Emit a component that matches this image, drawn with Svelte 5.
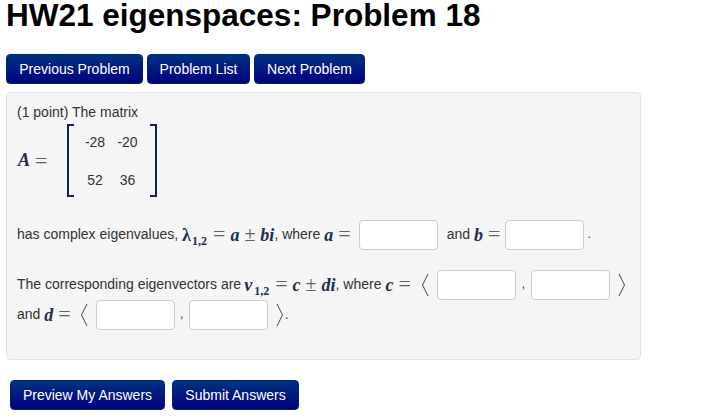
<script>
  const matrix = ['-28', '-20', '52', '36'];
</script>

{#snippet open()}
  <svg class="ang" width="8" height="24" viewBox="0 0 8 24" aria-hidden="true"><path d="M7 1 L1.5 12 L7 23" /></svg>
{/snippet}
{#snippet close()}
  <svg class="ang" width="8" height="24" viewBox="0 0 8 24" aria-hidden="true"><path d="M1 1 L6.5 12 L1 23" /></svg>
{/snippet}

<div class="page">
  <h1>HW21 eigenspaces: Problem 18</h1>
  <nav class="topnav">
    <button>Previous Problem</button>
    <button>Problem List</button>
    <button>Next Problem</button>
  </nav>
  <section class="panel">
    <div class="intro">(1 point) The matrix</div>
    <div class="matrixline">
      <span class="m lhs"><b class="A">A</b><i class="eq">=</i></span>
      <div class="matrix">
        {#each matrix as v}<span>{v}</span>{/each}
      </div>
    </div>
    <div class="line l1">
      <span>has complex eigenvalues,</span>
      <span class="m sym1"><b class="lam">λ</b><sub>1,2</sub><i class="eq">=</i><b>a</b><i class="pm">±</i><b>bi</b></span>
      <span>, where</span>
      <span class="m sym2"><b>a</b><i class="eq">=</i></span>
      <input class="in-a" />
      <span class="and">and</span>
      <span class="m sym2"><b>b</b><i class="eq">=</i></span>
      <input class="in-b" />
      <span class="dot">.</span>
    </div>
    <div class="line l2">
      <span>The corresponding eigenvectors are</span>
      <span class="m sym1"><b>v</b><sub>1,2</sub><i class="eq">=</i><b>c</b><i class="pm">±</i><b>di</b></span>
      <span>, where</span>
      <span class="m sym2"><b>c</b><i class="eq">=</i></span>
      {@render open()}
      <input />
      <span class="comma">,</span>
      <input />
      {@render close()}
    </div>
    <div class="line l3">
      <span>and</span>
      <span class="m sym2"><b>d</b><i class="eq">=</i></span>
      {@render open()}
      <input />
      <span class="comma">,</span>
      <input />
      {@render close()}
      <span class="dot2">.</span>
    </div>
  </section>
  <footer class="actions">
    <button>Preview My Answers</button>
    <button>Submit Answers</button>
  </footer>
</div>

<style>
  :global(body) { margin: 0; background: #fff; }
  .page { width: 706px; height: 420px; overflow: hidden; font-family: "Liberation Sans", Arial, sans-serif; font-size: 14px; color: #333; }
  h1 { margin: 0; padding: 0 0 0 6px; font-size: 31.5px; line-height: 30px; height: 54px; color: #000; font-weight: bold; box-sizing: border-box; }
  button {
    height: 30px; box-sizing: border-box; padding: 0; border: 1px solid #00246e; border-radius: 4px;
    background: linear-gradient(#00337f, #000080); color: #fff;
    font: 14px/20px "Liberation Sans", Arial, sans-serif;
  }
  .topnav { display: flex; gap: 4px; padding-left: 6px; height: 38px; }
  .topnav button:nth-child(1) { width: 137px; }
  .topnav button:nth-child(2) { width: 103px; }
  .topnav button:nth-child(3) { width: 111px; }
  .panel {
    margin-left: 6px; width: 635px; height: 268px; box-sizing: border-box; padding: 0 0 0 10px;
    background: #f5f5f5; border: 1px solid #e3e3e3; border-radius: 4px; color: #333;
  }
  .intro { height: 31px; padding-top: 10px; line-height: 18px; box-sizing: border-box; }
  .matrixline { display: flex; align-items: center; height: 73px; }
  .lhs { width: 50px; display: flex; align-items: center; }
  .A { margin-left: 1px; }
  .lhs .eq { margin-left: 5px; }
  .matrix {
    position: relative; display: grid; grid-template-columns: 32px 33px; grid-auto-rows: 38px;
    width: 90px; box-sizing: border-box; padding: 0 0 0 12px; justify-items: center; align-items: center; height: 73px; align-content: center;
  }
  .matrix::before, .matrix::after { content: ""; position: absolute; top: 0; bottom: 0; width: 7px; border: 2px solid #14244a; box-sizing: border-box; }
  .matrix::before { left: 0; border-right: 0; }
  .matrix::after { right: 0; border-left: 0; }
  .line { display: flex; align-items: center; height: 30px; white-space: nowrap; }
  .line > span:not(.m) { position: relative; top: -1px; }
  .l1 { margin-top: 23px; }
  .l2 { margin-top: 20px; }
  .m { font-family: "Liberation Serif", "DejaVu Serif", serif; font-size: 18px; color: #232f4a; white-space: pre; }
  .m b { font-style: italic; font-weight: bold; }
  .m .lam { font-style: normal; }
  .m sub { font-size: 12px; font-weight: bold; line-height: 0; margin-left: 1px; }
  .l2 .m sub { margin-left: 2px; }
  .m i { font-style: normal; font-weight: normal; color: #5a6270; line-height: 0; }
  .m .eq { font-size: 22px; margin: 0 4px 0 5px; }
  .sym1 .eq { margin: 0 5px 0 6px; }
  .m .pm { font-size: 20px; margin: 0 5px 0 5px; }
  .sym1 { margin-left: 4px; }
  .l2 .sym1 { margin-left: 3px; }
  .sym2 { margin-left: 4px; }
  input { width: 79px; height: 30px; box-sizing: border-box; margin: 0; padding: 0; border: 1px solid #ccc; border-radius: 4px; background: #fff; }
  .in-a { margin-left: 4px; }
  .and { margin-left: 9px; }
  .in-b { margin-left: 0; }
  .ang { flex: none; margin: 0 8px; }
  .l2 .ang:first-of-type { margin-left: 6px; }
  .l3 .ang:first-of-type { margin-left: 5px; }
  .comma { width: 15px; text-align: center; font-size: 12px; }
  .l3 .comma { width: 14px; }
  .ang path { fill: none; stroke: #3a4660; stroke-width: 1; }
  .dot { margin-left: 4px; font-size: 12px; }
  .dot2 { margin-left: -7px; }
  .actions { display: flex; gap: 7px; padding: 20px 0 0 10px; }
  .actions button:nth-child(1) { width: 155px; }
  .actions button:nth-child(2) { width: 127px; }
</style>
